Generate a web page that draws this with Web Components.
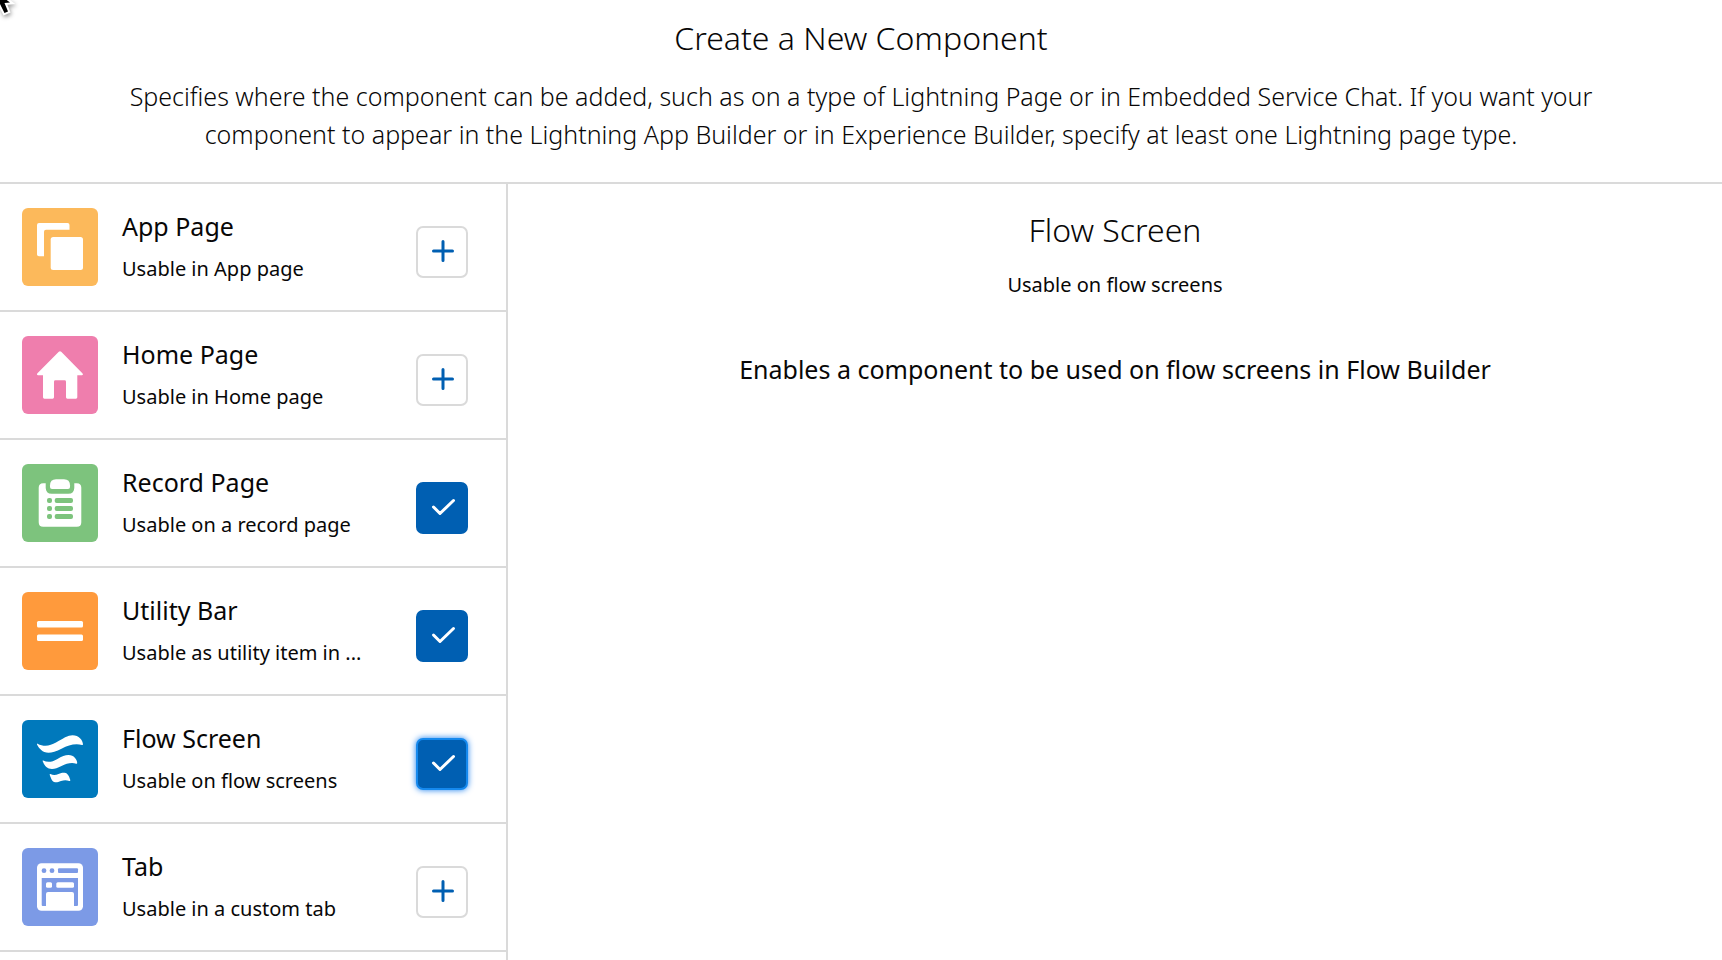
<!DOCTYPE html>
<html lang="en">
<head>
<meta charset="utf-8">
<title>Create a New Component</title>
<style>
  body {
    margin: 0;
    background: #fff;
    color: #080707;
    font-family: "Noto Sans", "Open Sans", sans-serif;
  }
</style>
</head>
<body>
<component-wizard>
  <wizard-header slot="header" heading="Create a New Component">
    Specifies where the component can be added, such as on a type of Lightning Page or in Embedded Service Chat. If you want your component to appear in the Lightning App Builder or in Experience Builder, specify at least one Lightning page type.
  </wizard-header>
  <target-item slot="targets" icon="app" name="App Page">Usable in App page</target-item>
  <target-item slot="targets" icon="home" name="Home Page">Usable in Home page</target-item>
  <target-item slot="targets" icon="record" name="Record Page" selected>Usable on a record page</target-item>
  <target-item slot="targets" icon="utility" name="Utility Bar" selected>Usable as utility item in ...</target-item>
  <target-item slot="targets" icon="flow" name="Flow Screen" selected active>Usable on flow screens</target-item>
  <target-item slot="targets" icon="tab" name="Tab">Usable in a custom tab</target-item>
  <target-detail heading="Flow Screen" summary="Usable on flow screens">Enables a component to be used on flow screens in Flow Builder</target-detail>
</component-wizard>
<mouse-pointer></mouse-pointer>

<script>
const ICONS = {
  app: {
    color: "#fcb95b",
    shape: `
      <path d="M17 15h28.500q2 0 2 2v4.700H24q-2 0-2 2v24.600h-5q-2 0-2-2V17q0-2 2-2z"/>
      <rect x="28.700" y="29" width="32.300" height="33" rx="2.500"/>`,
  },
  home: {
    color: "#ef7ead",
    shape: `<path d="M36.800 15.800q1.200-1 2.400 0L60.600 37.500q1 1.800-.6 1.800h-4.700v22q0 1.400-1.400 1.400H45.400q-1.400 0-1.400-1.400V45.700q0-1.400-1.400-1.400h-9.200q-1.400 0-1.400 1.400v15.600q0 1.400-1.400 1.400h-8.200q-1.400 0-1.400-1.400v-22H16q-1.600 0-.8-1.800z"/>`,
  },
  record: {
    color: "#7dc37d",
    shape: `
      <path d="M23.700 19.300h-2.500q-4.500 0-4.500 4.500v34.400q0 4.500 4.500 4.500h33.600q4.500 0 4.500-4.500V23.800q0-4.500-4.500-4.500h-2.500v4.400q0 6-6 6H29.700q-6 0-6-6z"/>
      <path d="M28 21.300q0-6 6-6h8q6 0 6 6v1.700q0 2-2 2H30q-2 0-2-2z"/>
      <g fill="#7dc37d">
        <rect x="25" y="34" width="5" height="5" rx="2"/><rect x="32.700" y="34" width="18.300" height="5" rx="2"/>
        <rect x="25" y="42" width="5" height="5" rx="2"/><rect x="32.700" y="42" width="18.300" height="5" rx="2"/>
        <rect x="25" y="50" width="5" height="5" rx="2"/><rect x="32.700" y="50" width="18.300" height="5" rx="2"/>
      </g>`,
  },
  utility: {
    color: "#ff9a3c",
    shape: `
      <rect x="15" y="29" width="46" height="6.600" rx="1.500"/>
      <rect x="15" y="42.500" width="46" height="6.600" rx="1.500"/>`,
  },
  flow: {
    color: "#0079bc",
    shape: `
      <path d="M15.500 23.700C22 27 28 26 34 22.500C41 18.500 46 15.300 50.500 15.300C57 15.300 60.500 20 61 24.300Q61 25.300 60 25C53 23 46 25.500 40 28.500C34 31.500 30 32.700 26.500 32.700C20.500 32.700 17 28.500 15 24.500Q14.700 23.300 15.500 23.700z"/>
      <path d="M21.200 40.500C25.500 42.700 30.500 42 35 39.200C40 36.300 43 35 46.500 35C52 35 55 39.500 55.200 42.800Q55.300 44 54.200 43.700C49.500 42.200 44.500 43.500 39.500 46C35.500 48 33 49 30 49C25 49 22.500 45.500 20.800 41.500Q20.300 40 21.200 40.500z"/>
      <path d="M28.400 54.100C31.500 55.500 34 55 36.500 54C39 53 40.500 52.500 42.500 52.700C46 53 47.500 57 48.300 60Q48.500 61.300 47.300 61C44.500 60 42 60 39 61C36.500 62 35 62.500 33.200 62.300C30.200 62 28.800 58 27.800 55Q27.400 53.600 28.400 54.100z"/>`,
  },
  tab: {
    color: "#7c9ae6",
    shape: `
      <rect x="15" y="15.300" width="46" height="47.500" rx="4.500"/>
      <g fill="#7c9ae6">
        <circle cx="22" cy="22.700" r="2.400"/><circle cx="30" cy="22.700" r="2.400"/>
        <rect x="36" y="20.300" width="20" height="4.800" rx="1"/>
        <path d="M19.700 30H56v27q0 1-1 1h-3V46q0-2-2-2H26q-2 0-2 2v12h-3.300q-1 0-1-1z"/>
      </g>
      <rect x="24" y="34.300" width="6" height="5.400" rx="1.500"/>
      <rect x="34.300" y="34.300" width="17.700" height="5.400" rx="1.500"/>`,
  },
};

class ComponentWizard extends HTMLElement {
  constructor() {
    super();
    this.attachShadow({ mode: "open" });
    this.shadowRoot.innerHTML = `
      <style>
        :host {
          display: flex;
          flex-direction: column;
          height: 100vh;
          overflow: hidden;
        }
        .columns {
          display: flex;
          flex: 1;
          min-height: 0;
        }
        .targets {
          flex: 0 0 auto;
          border-right: 2px solid #dadada;
          overflow: hidden;
        }
        main {
          flex: 1;
        }
      </style>
      <slot name="header"></slot>
      <div class="columns">
        <div class="targets"><slot name="targets"></slot></div>
        <main><slot></slot></main>
      </div>
    `;
  }
}

class WizardHeader extends HTMLElement {
  constructor() {
    super();
    this.attachShadow({ mode: "open" });
    this.shadowRoot.innerHTML = `
      <style>
        :host {
          display: block;
          padding: 18px 100px 29px;
          border-bottom: 2px solid #dadada;
          text-align: center;
          font-weight: 300;
        }
        h1 {
          margin: 0 0 19px;
          font-size: 32px;
          font-weight: 300;
          line-height: 40px;
        }
        p {
          margin: 0;
          font-size: 25px;
          line-height: 38px;
        }
      </style>
      <h1></h1>
      <p><slot></slot></p>
    `;
  }

  connectedCallback() {
    this.shadowRoot.querySelector("h1").textContent = this.getAttribute("heading");
  }
}

class TargetIcon extends HTMLElement {
  static get observedAttributes() {
    return ["name"];
  }

  constructor() {
    super();
    this.attachShadow({ mode: "open" });
    this.shadowRoot.innerHTML = `
      <style>
        :host {
          display: block;
          flex: none;
          width: 76px;
          height: 78px;
        }
        svg {
          display: block;
          border-radius: 6px;
        }
      </style>
      <svg width="76" height="78" viewBox="0 0 76 78" fill="#fff" aria-hidden="true"></svg>
    `;
  }

  attributeChangedCallback() {
    const icon = ICONS[this.getAttribute("name")];
    const svg = this.shadowRoot.querySelector("svg");
    svg.style.background = icon.color;
    svg.innerHTML = icon.shape;
  }
}

class TargetItem extends HTMLElement {
  static get observedAttributes() {
    return ["selected"];
  }

  constructor() {
    super();
    this.attachShadow({ mode: "open" });
    this.shadowRoot.innerHTML = `
      <style>
        :host {
          display: flex;
          align-items: flex-start;
          padding: 24px 38px 24px 22px;
          border-bottom: 2px solid #dadada;
        }
        .text {
          width: 268px;
          margin: 0 26px 0 24px;
          white-space: nowrap;
        }
        h2 {
          margin: 0 0 10px;
          font-size: 25px;
          font-weight: 400;
          line-height: 36px;
        }
        p {
          margin: 0;
          font-size: 20px;
          line-height: 30px;
        }
        button {
          box-sizing: border-box;
          width: 52px;
          height: 52px;
          margin: 18px 0 0;
          padding: 0;
          border: 2px solid #dadada;
          border-radius: 7px;
          background: #fff;
          color: #005fb2;
          cursor: pointer;
        }
        :host([selected]) button {
          border-color: #005fb2;
          background: #005fb2;
          color: #fff;
        }
        :host([active]) button,
        button:focus-visible {
          border-color: #1589ee;
          box-shadow: 0 0 6px #1b7fee;
          outline: none;
        }
        button svg {
          display: block;
          fill: none;
          stroke: currentColor;
          stroke-width: 3;
          stroke-linecap: round;
          stroke-linejoin: round;
        }
      </style>
      <target-icon></target-icon>
      <div class="text">
        <h2></h2>
        <p><slot></slot></p>
      </div>
      <button type="button">
        <svg width="48" height="48" viewBox="0 0 48 48" aria-hidden="true"><path></path></svg>
      </button>
    `;
    this.button = this.shadowRoot.querySelector("button");
    this.button.addEventListener("click", () => this.toggleAttribute("selected"));
  }

  connectedCallback() {
    this.shadowRoot.querySelector("target-icon").setAttribute("name", this.getAttribute("icon"));
    this.shadowRoot.querySelector("h2").textContent = this.getAttribute("name");
    this.button.setAttribute("aria-label", this.getAttribute("name"));
    this.update();
  }

  attributeChangedCallback() {
    this.update();
  }

  update() {
    const selected = this.hasAttribute("selected");
    this.button.setAttribute("aria-pressed", selected);
    this.button
      .querySelector("path")
      .setAttribute("d", selected ? "M15.500 23L22 29.500L35.500 16.500" : "M25 13.500v19M15.500 23h19");
  }
}

class TargetDetail extends HTMLElement {
  constructor() {
    super();
    this.attachShadow({ mode: "open" });
    this.shadowRoot.innerHTML = `
      <style>
        :host {
          display: block;
          padding: 26px 24px;
          text-align: center;
        }
        h2 {
          margin: 0 0 20px;
          font-size: 32px;
          font-weight: 300;
          line-height: 40px;
        }
        p {
          margin: 0;
          font-size: 25px;
          line-height: 38px;
        }
        .summary {
          margin-bottom: 50px;
          font-size: 20px;
          line-height: 30px;
        }
      </style>
      <h2></h2>
      <p class="summary"></p>
      <p><slot></slot></p>
    `;
  }

  connectedCallback() {
    this.shadowRoot.querySelector("h2").textContent = this.getAttribute("heading");
    this.shadowRoot.querySelector(".summary").textContent = this.getAttribute("summary");
  }
}

// Arrow pointer resting against the top left corner, mostly off the page.
class MousePointer extends HTMLElement {
  constructor() {
    super();
    this.attachShadow({ mode: "open" });
    this.shadowRoot.innerHTML = `
      <style>
        :host {
          position: absolute;
          top: 0;
          left: 0;
          pointer-events: none;
        }
        svg {
          display: block;
          filter: drop-shadow(1px 2px 2px rgba(0, 0, 0, 0.4));
        }
      </style>
      <svg width="24" height="24" viewBox="0 0 24 24" aria-hidden="true">
        <path d="M-4-8L10 2.500L4.500 3L8 11.500L4.500 13L0 4L-4 7z" fill="#000" stroke="#fff" stroke-width="4" paint-order="stroke"/>
      </svg>
    `;
  }
}

customElements.define("component-wizard", ComponentWizard);
customElements.define("wizard-header", WizardHeader);
customElements.define("target-icon", TargetIcon);
customElements.define("target-item", TargetItem);
customElements.define("target-detail", TargetDetail);
customElements.define("mouse-pointer", MousePointer);
</script>
</body>
</html>
